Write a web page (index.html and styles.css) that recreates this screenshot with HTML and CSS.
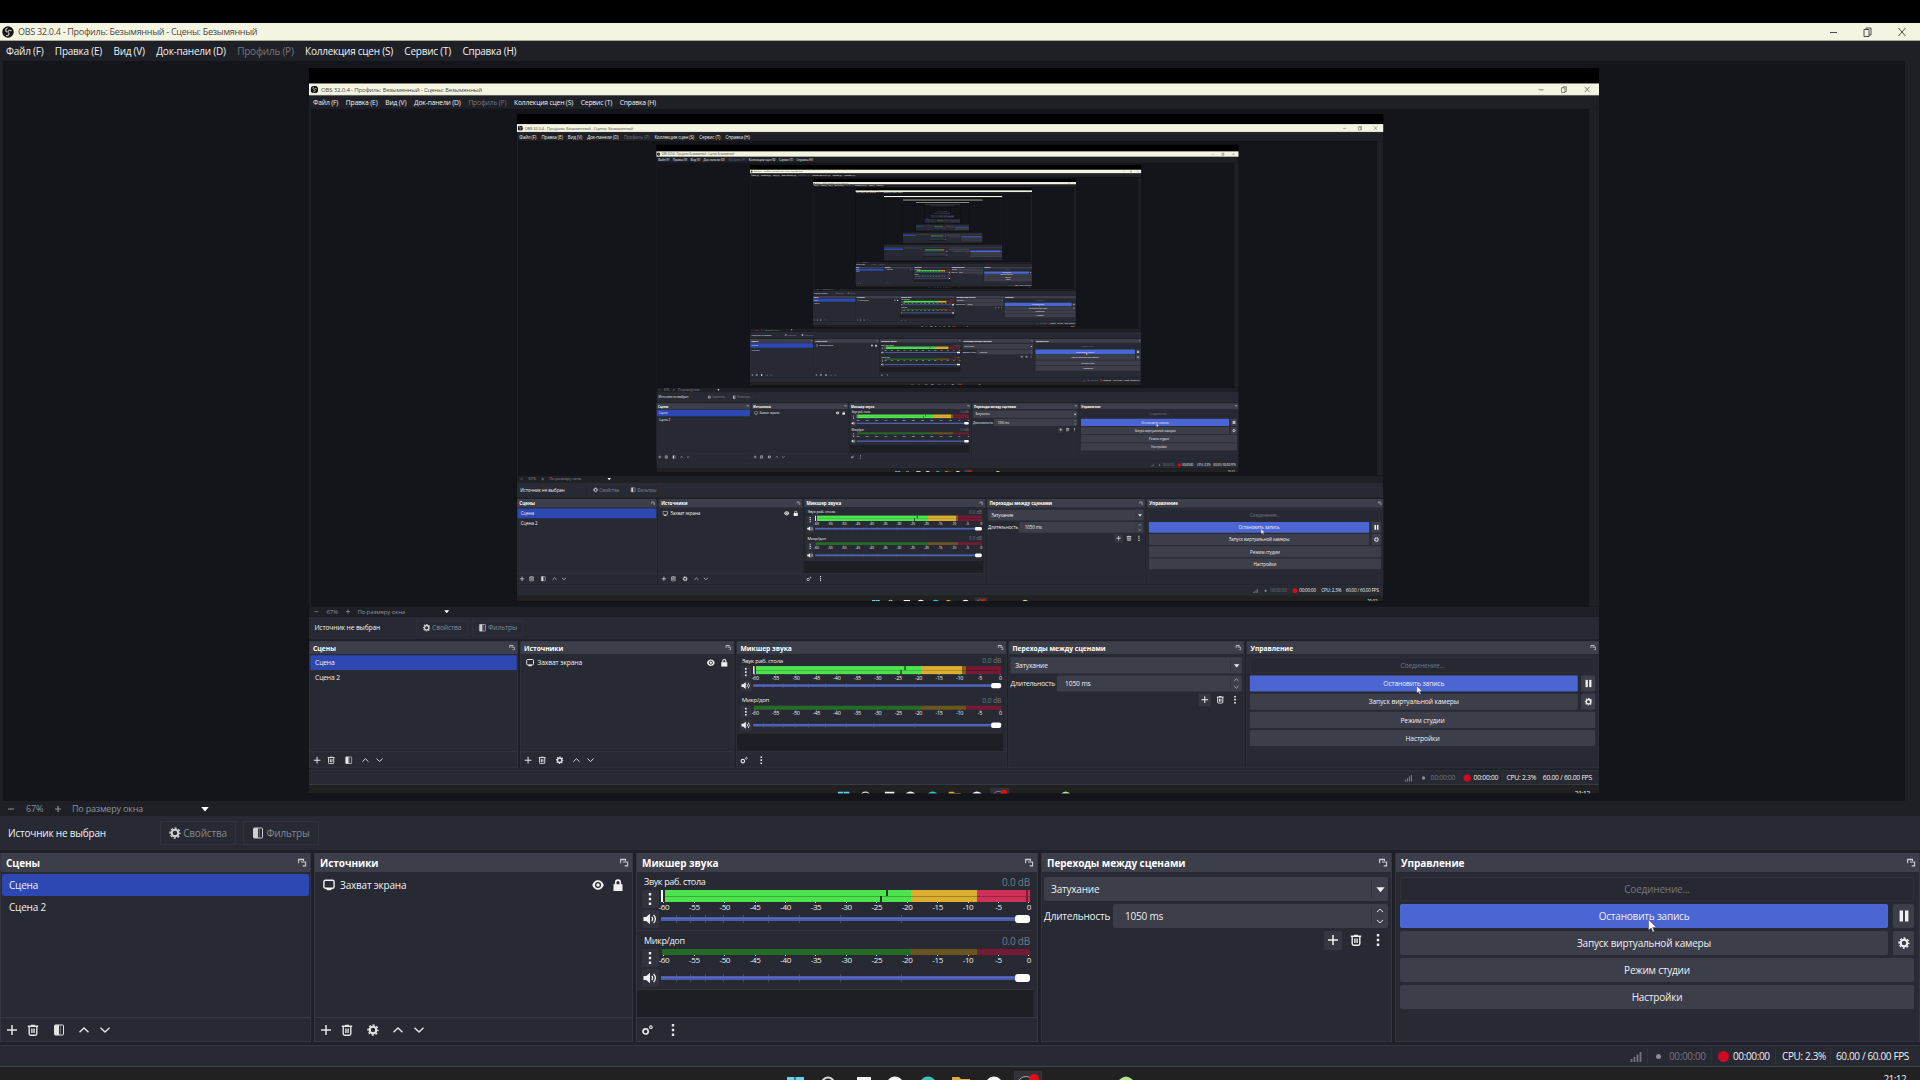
FILE: index.html
```html
<!DOCTYPE html>
<html lang="ru">

<head>
    <meta charset="UTF-8">
    <meta name="viewport" content="width=device-width, initial-scale=1.0">
    <title>OBS 32.0.4 - Профиль: Безымянный - Сцены: Безымянный</title>
    <link rel="stylesheet" href="styles.css">
</head>

<body>
    <!-- ICONS -->
    <svg class="sprite">
        <symbol id="i-obs" viewBox="0 0 24 24">
            <circle cx="12" cy="12" r="11.5" fill="#16161a" />
            <path d="M11 4c-4 1-5 6-1 8M19 10c-3-3-8-1-7 3M8 19c4 1 8-2 5-6" fill="none" stroke="#c8c8c0" stroke-width="2.4" />
        </symbol>
        <symbol id="i-plus" viewBox="0 0 12 12">
            <path d="M6 1v10M1 6h10" stroke="currentColor" stroke-width="1.5" />
        </symbol>
        <symbol id="i-trash" viewBox="0 0 12 12">
            <path d="M.8 2.2h10.4M4 1.4h4M2.2 2.5v7.3q0 1.4 1.4 1.4h4.8q1.4 0 1.4-1.4V2.5M4.9 4.5v4.6M7.1 4.5v4.6" fill="none" stroke="currentColor" stroke-width="1.4" />
        </symbol>
        <symbol id="i-filter" viewBox="0 0 12 12">
            <rect x="1.5" y="1" width="9" height="10" rx=".8" fill="none" stroke="currentColor" />
            <path d="M2 1h4v10H2z" fill="currentColor" />
            <path d="M7.3 2v8" stroke="currentColor" stroke-width=".7" opacity=".6" />
        </symbol>
        <symbol id="i-gear" viewBox="0 0 12 12">
            <circle cx="6" cy="6" r="3.3" fill="none" stroke="currentColor" stroke-width="2.1" />
            <circle cx="6" cy="6" r="4.9" fill="none" stroke="currentColor" stroke-width="1.5" stroke-dasharray="2.1 1.75" stroke-dashoffset="1" />
        </symbol>
        <symbol id="i-gears" viewBox="0 0 12 12">
            <circle cx="4.6" cy="7.4" r="2.6" fill="none" stroke="currentColor" stroke-width="1.7" />
            <circle cx="9.9" cy="3.2" r="1.3" fill="none" stroke="currentColor" stroke-width="1.1" />
        </symbol>
        <symbol id="i-up" viewBox="0 0 12 12">
            <path d="M1.5 8.3L6 3.9l4.5 4.4" fill="none" stroke="currentColor" stroke-width="1.4" />
        </symbol>
        <symbol id="i-down" viewBox="0 0 12 12">
            <path d="M1.5 3.7L6 8.1l4.5-4.4" fill="none" stroke="currentColor" stroke-width="1.4" />
        </symbol>
        <symbol id="i-caret" viewBox="0 0 12 12">
            <path d="M1.5 3.5h9L6 9z" fill="currentColor" />
        </symbol>
        <symbol id="i-dots" viewBox="0 0 12 12">
            <path d="M4.8 0h2.4v2.6H4.8zM4.8 4.7h2.4v2.6H4.8zM4.8 9.4h2.4V12H4.8z" fill="currentColor" />
        </symbol>
        <symbol id="i-float" viewBox="0 0 12 12">
            <path d="M1.5 7V1.8h6.5V4M1.5 2.2h6.5" fill="none" stroke="currentColor" stroke-width="1.4" />
            <path d="M4.600 5.300h6.200v5.200H7" fill="none" stroke="currentColor" stroke-width="1.4" />
        </symbol>
        <symbol id="i-display" viewBox="0 0 12 12">
            <rect x=".9" y="1.2" width="10.2" height="8" rx="1.5" fill="none" stroke="currentColor" stroke-width="1.4" />
            <path d="M3.5 9.4h5v1.8h-5z" fill="currentColor" />
        </symbol>
        <symbol id="i-eye" viewBox="0 0 12 12">
            <path d="M.2 6Q2 1.200 6 1.200T11.800 6Q10 10.800 6 10.800T.2 6z" fill="currentColor" />
            <circle cx="6" cy="6" r="2.4" fill="none" stroke="#272a33" stroke-width="1.3" />
        </symbol>
        <symbol id="i-lock" viewBox="0 0 12 12">
            <path d="M1.5 5.2h9V12h-9z" fill="currentColor" />
            <path d="M3.7 6V3.400a2.300 2.300 0 0 1 4.600 0V6" fill="none" stroke="currentColor" stroke-width="1.6" />
        </symbol>
        <symbol id="i-speaker" viewBox="0 0 14 12">
            <path d="M.5 4h2.700L7 .8v10.400L3.200 8H.5z" fill="currentColor" />
            <path d="M8.700 3.800q1.800 2.200 0 4.400M10.600 1.800q3.600 4.200 0 8.400" fill="none" stroke="currentColor" stroke-width="1.3" />
        </symbol>
        <symbol id="i-pause" viewBox="0 0 12 12">
            <path d="M1.600.5h3.400v11H1.600zM7 .5h3.400v11H7z" fill="currentColor" />
        </symbol>
        <symbol id="i-signal" viewBox="0 0 12 12">
            <path d="M1.500 12V9M4.500 12V7M7.500 12V4.500M10.500 12V2" stroke="currentColor" stroke-width="1.8" />
        </symbol>
        <symbol id="i-cursor" viewBox="0 0 9 14">
            <path d="M.5.500v10.800l2.600-2.300 1.700 4 1.600-.7-1.700-3.900h3.700z" fill="#fff" stroke="#333a66" stroke-width=".5" />
        </symbol>
    </svg>

    <div class="desktop">
        <div class="title-bar">
            <svg class="icon"><use href="#i-obs" /></svg>
            <span class="title-text">OBS 32.0.4 - Профиль: Безымянный - Сцены: Безымянный</span>
            <svg class="window-buttons" viewBox="0 0 80 12">
                <path d="M1 6.500h7M35 3.500h5v7h-5zM37 3.500v-1.500h5v7h-2M69.500 2l7 8M76.500 2l-7 8" fill="none" stroke="#3c3c38" stroke-width=".9" />
            </svg>
        </div>

        <div class="menu-bar">
            <span>Файл (F)</span>
            <span>Правка (E)</span>
            <span>Вид (V)</span>
            <span>Док-панели (D)</span>
            <span class="muted">Профиль (P)</span>
            <span>Коллекция сцен (S)</span>
            <span>Сервис (T)</span>
            <span>Справка (H)</span>
        </div>

        <div class="preview">
            <div class="capture"></div>
        </div>

        <div class="zoom-bar">
            <svg class="icon"><path d="M3 6h6" stroke="currentColor" /></svg>
            <span class="zoom-value">67%</span>
            <svg class="icon"><path d="M6 3v6M3 6h6" stroke="currentColor" stroke-width="1.2" /></svg>
            <span class="zoom-mode">По размеру окна</span>
            <svg class="icon caret"><use href="#i-caret" /></svg>
        </div>

        <div class="context-bar">
            <span class="context-label">Источник не выбран</span>
            <div class="context-btn"><svg class="icon"><use href="#i-gear" /></svg><span>Свойства</span></div>
            <div class="context-btn"><svg class="icon"><use href="#i-filter" /></svg><span>Фильтры</span></div>
        </div>

        <div class="docks">
            <!-- SCENES -->
            <div class="dock">
                <div class="dock-title"><span>Сцены</span><svg class="icon"><use href="#i-float" /></svg></div>
                <div class="dock-list">
                    <div class="row selected">Сцена</div>
                    <div class="row">Сцена 2</div>
                </div>
                <div class="dock-tools">
                    <svg class="icon"><use href="#i-plus" /></svg>
                    <svg class="icon"><use href="#i-trash" /></svg>
                    <svg class="icon spaced"><use href="#i-filter" /></svg>
                    <svg class="icon spaced"><use href="#i-up" /></svg>
                    <svg class="icon"><use href="#i-down" /></svg>
                </div>
            </div>

            <!-- SOURCES -->
            <div class="dock">
                <div class="dock-title"><span>Источники</span><svg class="icon"><use href="#i-float" /></svg></div>
                <div class="dock-list">
                    <div class="row source">
                        <svg class="icon"><use href="#i-display" /></svg>
                        <span>Захват экрана</span>
                        <svg class="icon eye"><use href="#i-eye" /></svg>
                        <svg class="icon"><use href="#i-lock" /></svg>
                    </div>
                </div>
                <div class="dock-tools">
                    <svg class="icon"><use href="#i-plus" /></svg>
                    <svg class="icon"><use href="#i-trash" /></svg>
                    <svg class="icon spaced"><use href="#i-gear" /></svg>
                    <svg class="icon spaced"><use href="#i-up" /></svg>
                    <svg class="icon"><use href="#i-down" /></svg>
                </div>
            </div>

            <!-- MIXER -->
            <div class="dock">
                <div class="dock-title"><span>Микшер звука</span><svg class="icon"><use href="#i-float" /></svg></div>
                <div class="mixer">
                    <div class="channel">
                        <div class="channel-name"><span>Звук раб. стола</span><span class="db">0.0 dB</span></div>
                        <div class="channel-row">
                            <div class="channel-btn"><svg class="icon"><use href="#i-dots" /></svg></div>
                            <div class="meter-box">
                                <div class="meter live">
                                    <i class="peak peak-a"></i>
                                    <i class="peak peak-b"></i>
                                    <i class="peak peak-c"></i>
                                </div>
                                <div class="scale"></div>
                            </div>
                        </div>
                        <div class="channel-row">
                            <div class="channel-btn"><svg class="icon speaker"><use href="#i-speaker" /></svg></div>
                            <div class="slider"></div>
                        </div>
                    </div>
                    <div class="channel">
                        <div class="channel-name"><span>Микр/доп</span><span class="db">0.0 dB</span></div>
                        <div class="channel-row">
                            <div class="channel-btn"><svg class="icon"><use href="#i-dots" /></svg></div>
                            <div class="meter-box">
                                <div class="meter"></div>
                                <div class="scale"></div>
                            </div>
                        </div>
                        <div class="channel-row">
                            <div class="channel-btn"><svg class="icon speaker"><use href="#i-speaker" /></svg></div>
                            <div class="slider"></div>
                        </div>
                    </div>
                </div>
                <div class="dock-tools mixer-tools">
                    <svg class="icon"><use href="#i-gears" /></svg>
                    <svg class="icon"><use href="#i-dots" /></svg>
                </div>
            </div>

            <!-- TRANSITIONS -->
            <div class="dock">
                <div class="dock-title"><span>Переходы между сценами</span><svg class="icon"><use href="#i-float" /></svg></div>
                <div class="transitions">
                    <div class="field combo"><span>Затухание</span><div class="field-end"><svg class="icon"><use href="#i-caret" /></svg></div></div>
                    <div class="duration">
                        <span class="duration-label">Длительность</span>
                        <div class="field spin"><span>1050 ms</span>
                            <div class="field-end"><svg class="icon"><use href="#i-up" /></svg><svg class="icon"><use href="#i-down" /></svg></div>
                        </div>
                    </div>
                    <div class="transition-tools">
                        <div class="tool-btn"><svg class="icon"><use href="#i-plus" /></svg></div>
                        <svg class="icon"><use href="#i-trash" /></svg>
                        <svg class="icon"><use href="#i-dots" /></svg>
                    </div>
                </div>
            </div>

            <!-- CONTROLS -->
            <div class="dock">
                <div class="dock-title"><span>Управление</span><svg class="icon"><use href="#i-float" /></svg></div>
                <div class="controls">
                    <div class="btn disabled">Соединение...</div>
                    <div class="btn-row">
                        <div class="btn active">Остановить запись</div>
                        <div class="btn small"><svg class="icon"><use href="#i-pause" /></svg></div>
                    </div>
                    <div class="btn-row">
                        <div class="btn">Запуск виртуальной камеры</div>
                        <div class="btn small"><svg class="icon"><use href="#i-gear" /></svg></div>
                    </div>
                    <div class="btn">Режим студии</div>
                    <div class="btn">Настройки</div>
                </div>
            </div>
        </div>

        <div class="status-bar">
            <div class="status-item signal muted"><svg class="icon"><use href="#i-signal" /></svg></div>
            <div class="status-item stream muted"><i class="dot"></i><span>00:00:00</span></div>
            <div class="status-item rec"><i class="dot"></i><span>00:00:00</span></div>
            <div class="status-item cpu">CPU: 2.3%</div>
            <div class="status-item fps">60.00 / 60.00 FPS</div>
        </div>

        <div class="taskbar">
            <svg class="task-icons" viewBox="0 0 360 13">
                <path d="M1 10h7.500v8H1zM9.500 10H18v8H9.500z" fill="#62d3ee" />
                <circle cx="42" cy="16.500" r="6" fill="none" stroke="#d8d8d8" stroke-width="2" />
                <path d="M71 10h14v8H71z" fill="#f4f4f4" />
                <circle cx="109" cy="18" r="8.500" fill="#f6f6f6" />
                <circle cx="142" cy="18" r="8.500" fill="#3cc0c0" />
                <path d="M166 10h7l2 2h9v6h-18z" fill="#e0a93a" />
                <circle cx="208" cy="18" r="8.500" fill="#f6f6f6" />
                <path d="M228 4h28v14h-28z" fill="#323238" />
                <circle cx="240" cy="18" r="8.500" fill="#26262a" stroke="#aaa" />
                <circle cx="248" cy="12" r="5" fill="#e80c0c" />
                <path d="M332 14q8-9 16 0z" fill="#b6e68c" />
            </svg>
            <span class="clock">21:12</span>
        </div>

        <svg class="cursor"><use href="#i-cursor" /></svg>
    </div>

    <script>
        const LEVELS = 13;
        const TINY_FROM = 7;
        const desktop = document.querySelector('.desktop');

        //scale labels under the meters:
        document.querySelectorAll('.scale').forEach(scale => {
            for (let db = -60; db <= 0; db += 5) {
                const mark = document.createElement('span');
                mark.innerText = db;
                scale.appendChild(mark);
            }
        });

        //the preview shows the desktop itself, again and again:
        const template = desktop.cloneNode(true);
        let inner = null;
        for (let level = LEVELS; level > 0; level--) {
            const copy = template.cloneNode(true);
            if (level >= TINY_FROM) {
                //letters are smaller than a pixel here, keep only the shapes
                copy.classList.add('tiny');
                copy.querySelectorAll('*').forEach(el => {
                    if (!el.children.length) el.textContent = '';
                });
            }
            if (inner) copy.querySelector('.capture').appendChild(inner);
            inner = copy;
        }
        desktop.querySelector('.capture').appendChild(inner);
    </script>
</body>

</html>
```
FILE: styles.css
```css
* {
    box-sizing: border-box;
    margin: 0;
    padding: 0;
}

body {
    width: 1920px;
    height: 1080px;
    overflow: hidden;
    background-color: #000;
}

.sprite {
    display: none;
}

.desktop {
    position: relative;
    display: flex;
    flex-direction: column;
    width: 1920px;
    height: 1080px;
    padding-top: 23px;
    overflow: hidden;
    background-color: #000;
    color: #f0f0f2;
    font-family: 'Open Sans', 'Noto Sans', sans-serif;
    font-size: 10px;
    letter-spacing: -0.2px;
    line-height: 14px;
    white-space: nowrap;
}

.icon {
    display: block;
    width: 12px;
    height: 12px;
    flex: none;
}

.muted {
    color: #73757d;
}

/*TITLE AND MENU*/
.title-bar {
    display: flex;
    align-items: center;
    height: 18px;
    padding: 0 11px 0 2px;
    background-color: #f4f4e2;
    border-bottom: 1px solid #a8a89c;
    color: #4a4a44;
    flex: none;
}

.title-text {
    margin-left: 4px;
    font-size: 9px;
    letter-spacing: -0.28px;
    flex: 1;
}

.tiny .title-bar {
    height: 28px;
    margin-bottom: -10px;
    border-bottom: 0;
}

.window-buttons {
    width: 80px;
    height: 12px;
}

.menu-bar {
    display: flex;
    gap: 11.5px;
    align-items: center;
    height: 20px;
    padding: 0 0 1px 6px;
    background-color: #1f2026;
    letter-spacing: -0.24px;
    flex: none;
}

/*PREVIEW*/
.preview {
    display: flex;
    align-items: center;
    justify-content: center;
    height: 740px;
    background-color: #14151a;
    border-right: 15px solid #1f2026;
    border-left: 3px solid #1f2026;
    flex: none;
}

.capture {
    width: 1290px;
    height: 726px;
    overflow: hidden;
}

.capture > .desktop {
    transform: scale(0.672);
    transform-origin: 0 0;
}

/*BARS UNDER THE PREVIEW*/
.zoom-bar {
    display: flex;
    align-items: center;
    height: 15px;
    padding-left: 5px;
    background-color: #1f2026;
    color: #8f9097;
    font-size: 9px;
    flex: none;
}

.zoom-value {
    width: 26px;
    margin-left: 9px;
}

.zoom-mode {
    width: 128px;
    margin-left: 8px;
}

.zoom-bar .caret {
    width: 10px;
    color: #fff;
}

.context-bar {
    display: flex;
    align-items: center;
    gap: 7px;
    height: 37px;
    padding-left: 8px;
    background-color: #272a33;
    border-bottom: 3px solid #1f2129;
    flex: none;
}

.context-label {
    width: 145px;
}

.context-btn {
    display: flex;
    align-items: center;
    justify-content: center;
    gap: 2px;
    width: 76px;
    height: 24px;
    border: 1px solid #30333c;
    color: #85878f;
}

.context-btn .icon {
    color: #d0d0d4;
}

/*DOCKS*/
.docks {
    display: grid;
    grid-template-columns: 311px 319px 402px 351px 525px;
    gap: 3px;
    height: 189px;
    background-color: #1e2028;
    flex: none;
}

.dock {
    display: flex;
    flex-direction: column;
    background-color: #272a33;
    border: 1px solid #343741;
    border-top: 0;
}

.dock-title {
    display: flex;
    align-items: center;
    justify-content: space-between;
    height: 19px;
    padding: 0 3px 0 5px;
    background-color: #3c3e49;
    color: #fff;
    font-weight: 700;
    letter-spacing: -0.05px;
    flex: none;
}

.dock-title .icon {
    width: 10px;
    height: 9px;
    color: #d0d0d4;
}

.dock-list {
    flex: 1;
    padding: 2px 1px;
}

.row {
    display: flex;
    align-items: center;
    height: 22px;
    padding-left: 7px;
    border-radius: 2px;
}

.row.selected {
    background-color: #2d48b2;
}

.row.source {
    padding: 0 7px 0 7px;
}

.row.source span {
    margin-left: 5px;
}

.row .eye {
    margin-left: auto;
    margin-right: 8px;
}

.dock-tools {
    display: flex;
    align-items: center;
    gap: 9px;
    height: 24px;
    padding-left: 5px;
    border-top: 1px solid #363944;
    color: #e4e4e8;
    flex: none;
}

.dock-tools .spaced {
    margin-left: 4.5px;
}

/*MIXER*/
.mixer {
    flex: 1;
    margin-right: 4px;
    background-color: #1e1f25;
}

.channel {
    height: 59px;
    padding: 3px 3px 0 5px;
    background-color: #272a33;
    border-bottom: 1px solid #30333d;
}

.channel-name {
    display: flex;
    justify-content: space-between;
    height: 15px;
    padding-left: 2px;
    font-size: 9px;
    letter-spacing: -0.35px;
}

.db {
    color: #777982;
    font-size: 10px;
    letter-spacing: -0.2px;
}

.channel-row {
    display: flex;
    gap: 2px;
    height: 20px;
}

.channel-btn {
    display: flex;
    align-items: center;
    justify-content: center;
    width: 17px;
    height: 18px;
    background-color: #30323c;
    border-radius: 2px;
}

.icon.speaker {
    width: 14px;
}

.meter-box {
    width: 370px;
}

.meter {
    position: relative;
    height: 6px;
    margin-left: 1px;
    background: linear-gradient(to right, #256b28 249px, #6b551e 249px 315px, #741a35 315px);
}

.meter.live {
    height: 12px;
    margin-left: 0;
    border-left: 2px solid #fff;
    background: linear-gradient(to right, #272a33 2px, #4ce34f 2px 248px, #d9ae31 248px 314px, #cf3158 314px);
}

/*line between left and right audio channels*/
.meter.live::after {
    content: "";
    display: block;
    height: 6px;
    margin-left: 2px;
    border-bottom: 1px solid rgba(0, 0, 0, 0.25);
}

.capture .meter.live {
    background: linear-gradient(to right, #272a33 2px, #4ce34f 2px 248px, #d9ae31 248px 309px, #80601c 309px 314px, #741a35 314px);
}

.peak {
    position: absolute;
    width: 2px;
    height: 6px;
    background-color: #17391c;
}

.peak-a {
    left: 223px;
    top: 0;
}

.peak-b {
    left: 217px;
    top: 6px;
}

.peak-c {
    left: 363px;
    top: 0;
    height: 12px;
    background-color: #7d1a38;
}

.scale {
    display: flex;
    justify-content: space-between;
    margin: -1px -9px 0 -7px;
    font-size: 8px;
    letter-spacing: -0.4px;
    line-height: 8px;
}

.scale span {
    width: 20px;
    text-align: center;
}

.scale span::before {
    content: "";
    display: block;
    width: 1px;
    height: 2px;
    margin: 0 auto;
    background-color: #d8d8dc;
}

.slider {
    position: relative;
    width: 370px;
    height: 18px;
    background:
        linear-gradient(#5a6cc0, #5a6cc0) 0 8px / 100% 1px no-repeat,
        linear-gradient(#4a5cab, #4a5cab) 0 7px / 100% 4px no-repeat,
        linear-gradient(#4b4e5a, #4b4e5a) 15px 5px / 1px 8px no-repeat,
        linear-gradient(#4b4e5a, #4b4e5a) 29px 5px / 1px 8px no-repeat,
        linear-gradient(#4b4e5a, #4b4e5a) 44px 5px / 1px 8px no-repeat,
        linear-gradient(#4b4e5a, #4b4e5a) 62px 5px / 1px 8px no-repeat,
        linear-gradient(#4b4e5a, #4b4e5a) 82px 5px / 1px 8px no-repeat,
        linear-gradient(#4b4e5a, #4b4e5a) 107px 5px / 1px 8px no-repeat,
        linear-gradient(#4b4e5a, #4b4e5a) 138px 5px / 1px 8px no-repeat,
        linear-gradient(#4b4e5a, #4b4e5a) 179px 5px / 1px 8px no-repeat,
        linear-gradient(#4b4e5a, #4b4e5a) 240px 5px / 1px 8px no-repeat;
}

.slider::after {
    content: "";
    display: block;
    width: 15px;
    height: 8px;
    margin-left: auto;
    background-color: #fff;
    border-radius: 3px;
    transform: translateY(5px);
}

.mixer-tools {
    gap: 13.5px;
    padding-left: 4px;
}

/*TRANSITIONS*/
.transitions {
    padding: 5px 3px 0 2px;
}

.field {
    display: flex;
    align-items: center;
    justify-content: space-between;
    height: 24px;
    background-color: #3c3e49;
    border-radius: 2px;
}

.combo {
    padding-left: 7px;
}

.field-end {
    display: flex;
    flex-direction: column;
    align-items: center;
    justify-content: center;
    gap: 2px;
    width: 17px;
    height: 18px;
    border-left: 1px solid #30323c;
}

.combo .icon {
    width: 11px;
    height: 11px;
}

.spin .icon {
    width: 8px;
    height: 9px;
}

.duration {
    display: flex;
    align-items: center;
    margin-top: 3px;
}

.duration-label {
    width: 69px;
}

.spin {
    flex: 1;
    padding-left: 12px;
}

.transition-tools {
    display: flex;
    align-items: center;
    justify-content: flex-end;
    gap: 10px;
    height: 24px;
    padding-right: 4px;
}

.tool-btn {
    display: flex;
    align-items: center;
    justify-content: center;
    width: 18px;
    height: 19px;
    margin-right: -2px;
    background-color: #343640;
}

/*CONTROLS*/
.controls {
    display: flex;
    flex-direction: column;
    gap: 3px;
    padding: 5px 5px 0 4px;
}

.btn-row {
    display: flex;
    gap: 5px;
}

.btn {
    display: flex;
    align-items: center;
    justify-content: center;
    flex: 1;
    height: 24px;
    min-height: 24px;
    background-color: #3c3e49;
    border-radius: 2px;
}

.btn.small {
    flex: none;
    width: 21px;
}

.btn.active {
    background-color: #4b65d2;
}

.btn.disabled {
    background-color: #262932;
    border: 1px solid #2f323b;
    color: #75777f;
}

/*STATUS BAR AND TASKBAR*/
.status-bar {
    display: flex;
    align-items: center;
    justify-content: flex-end;
    height: 25px;
    padding: 4px 10px 0 0;
    background-color: #272a33;
    border-bottom: 1px solid #41444c;
    box-shadow: inset 0 3px #20222a, inset 0 4px #343741;
    letter-spacing: -0.36px;
    flex: none;
}

.status-item {
    display: flex;
    align-items: center;
    height: 18px;
    padding-left: 6px;
    border-left: 1px solid #30333c;
}

.dot {
    border-radius: 50%;
}

.signal {
    width: 23px;
    border-left: 0;
}

.stream {
    width: 64px;
    padding-left: 8px;
}

.stream .dot {
    width: 5px;
    height: 5px;
    margin-right: 8px;
    background-color: #8a8c94;
}

.rec {
    width: 64px;
}

.rec .dot {
    width: 11px;
    height: 11px;
    margin-right: 4px;
    background-color: #d00a20;
}

.cpu {
    width: 55px;
}

.fps {
    width: 80px;
    padding-left: 5px;
}

.taskbar {
    display: flex;
    justify-content: space-between;
    height: 13px;
    padding: 0 14px 0 786px;
    overflow: hidden;
    background-color: #222122;
    flex: none;
}

.task-icons {
    width: 360px;
    height: 13px;
}

.clock {
    padding-top: 5px;
    letter-spacing: -0.6px;
}

.cursor {
    position: absolute;
    left: 1648px;
    top: 919px;
    width: 9px;
    height: 14px;
}
```
